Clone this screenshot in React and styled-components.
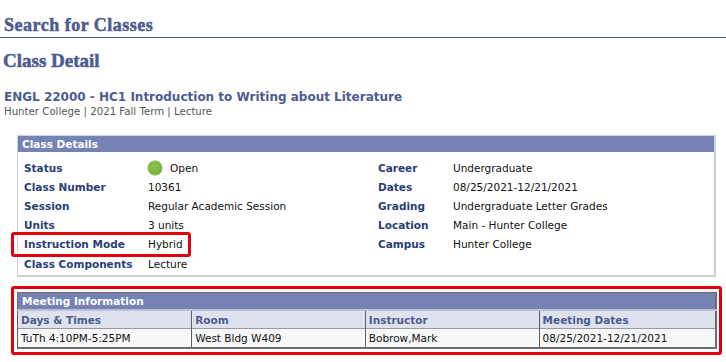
import React from "react";
import styled, { createGlobalStyle } from "styled-components";

const GlobalStyle = createGlobalStyle`
  html, body {
    margin: 0;
    padding: 0;
    background: #ffffff;
  }
  body {
    font-family: "DejaVu Sans", Verdana, sans-serif;
    color: #000;
  }
`;

const Page = styled.div`
  width: 726px;
  height: 362px;
  overflow: hidden;
  padding-top: 16px;
  box-sizing: border-box;
`;

const PageTitle = styled.h1`
  margin: 0;
  padding: 0 0 2px 4px;
  font-family: "Liberation Serif", Georgia, serif;
  font-weight: bold;
  font-size: 18px;
  line-height: 19px;
  letter-spacing: 0.5px;
  color: #4d5b8f;
  -webkit-text-stroke: 0.5px #4d5b8f;
  border-bottom: 1.5px solid #4d5b8f;
`;

const SubTitle = styled.h2`
  margin: 12px 0 0 3px;
  font-family: "Liberation Serif", Georgia, serif;
  font-weight: bold;
  font-size: 19px;
  line-height: 22px;
  color: #4d5b8f;
  -webkit-text-stroke: 0.5px #4d5b8f;
`;

const CourseTitle = styled.div`
  margin: 18px 0 0 4px;
  font-weight: bold;
  font-size: 12px;
  line-height: 15px;
  color: #4d5b8f;
`;

const CourseMeta = styled.div`
  margin: 0 0 0 4px;
  font-size: 10.2px;
  line-height: 14px;
  color: #555;
`;

const Box = styled.section`
  margin: 16px 10px 0 17px;
  width: 699px;
  border: 1px solid #cfd0d6;
  border-right-width: 2px;
  border-bottom-width: 2px;
  box-sizing: border-box;
`;

const BoxHeader = styled.div`
  background: #7682b3;
  color: #fff;
  font-weight: bold;
  font-size: 10.5px;
  line-height: 16px;
  height: 16px;
  padding-left: 4px;
`;

const Columns = styled.div`
  display: grid;
  grid-template-columns: 354px 1fr;
  padding: 6px 0 2px 6px;
`;

const FieldList = styled.div`
  display: flex;
  flex-direction: column;
`;

const Field = styled.div`
  position: relative;
  display: grid;
  grid-template-columns: ${({ $labelWidth }) => $labelWidth}px 1fr;
  align-items: center;
  height: 19.2px;
  font-size: 10.5px;

  ${({ $highlight }) =>
    $highlight &&
    `
    &::after {
      content: "";
      position: absolute;
      left: -13px;
      top: -3px;
      width: 180px;
      height: 25px;
      border: 3px solid #e0000b;
      border-radius: 3px;
      box-sizing: border-box;
    }
  `}
`;

const Label = styled.span`
  font-weight: bold;
  color: #2a3d78;
`;

const Value = styled.span`
  display: flex;
  align-items: center;
  gap: 8px;
  color: #111;
`;

const StatusDot = styled.span`
  display: inline-block;
  width: 14px;
  height: 14px;
  border-radius: 50%;
  background: radial-gradient(circle at 45% 40%, #8cc84b, #6aa631);
  box-shadow: 0 0 0 0.5px #5d9228;
`;

const Highlight = styled.div`
  margin: 9px 4px 0 11px;
  border: 3px solid #e0000b;
  border-radius: 3px;
  padding: 3px;
`;

const Grid = styled.table`
  width: 700px;
  border-collapse: collapse;
  border: 1px solid #6d6d6d;
  border-right-width: 2px;
  border-bottom-width: 2px;
  font-size: 10.5px;
`;

const GridTitle = styled.th`
  background: #7682b3;
  color: #fff;
  text-align: left;
  font-weight: bold;
  height: 16px;
  padding: 0 4px;
  line-height: 16px;
`;

const HeadCell = styled.th`
  background: #dde2ee;
  color: #4d5b8f;
  text-align: left;
  font-weight: bold;
  height: 17px;
  padding: 0 3px;
  border-left: 1px solid #5f5f5f;
  border-top: 2px solid #b8c0d8;
  width: ${({ $w }) => $w}px;
`;

const Cell = styled.td`
  background: #f7f7f7;
  color: #111;
  height: 18px;
  padding: 0 3px;
  border-left: 1px solid #5f5f5f;
  border-top: 1px solid #9a9a9a;
`;

const leftFields = [
  ["Status", "Open", true],
  ["Class Number", "10361"],
  ["Session", "Regular Academic Session"],
  ["Units", "3 units"],
  ["Instruction Mode", "Hybrid", false, true],
  ["Class Components", "Lecture"],
];

const rightFields = [
  ["Career", "Undergraduate"],
  ["Dates", "08/25/2021-12/21/2021"],
  ["Grading", "Undergraduate Letter Grades"],
  ["Location", "Main - Hunter College"],
  ["Campus", "Hunter College"],
];

const meetingCols = [
  ["Days & Times", 175],
  ["Room", 175],
  ["Instructor", 173],
  ["Meeting Dates", 176],
];

const meetingRow = [
  "TuTh 4:10PM-5:25PM",
  "West Bldg W409",
  "Bobrow,Mark",
  "08/25/2021-12/21/2021",
];

const App = () => (
  <Page>
    <GlobalStyle />
    <PageTitle>Search for Classes</PageTitle>
    <SubTitle>Class Detail</SubTitle>
    <CourseTitle>
      ENGL 22000 - HC1 Introduction to Writing about Literature
    </CourseTitle>
    <CourseMeta>Hunter College | 2021 Fall Term | Lecture</CourseMeta>

    <Box>
      <BoxHeader>Class Details</BoxHeader>
      <Columns>
        <FieldList>
          {leftFields.map(([label, value, dot, hl]) => (
            <Field key={label} $labelWidth={124} $highlight={hl}>
              <Label>{label}</Label>
              <Value>
                {dot && <StatusDot />}
                {value}
              </Value>
            </Field>
          ))}
        </FieldList>
        <FieldList>
          {rightFields.map(([label, value]) => (
            <Field key={label} $labelWidth={75}>
              <Label>{label}</Label>
              <Value>{value}</Value>
            </Field>
          ))}
        </FieldList>
      </Columns>
    </Box>

    <Highlight>
      <Grid>
        <thead>
          <tr>
            <GridTitle colSpan={4}>Meeting Information</GridTitle>
          </tr>
          <tr>
            {meetingCols.map(([name, w]) => (
              <HeadCell key={name} $w={w}>
                {name}
              </HeadCell>
            ))}
          </tr>
        </thead>
        <tbody>
          <tr>
            {meetingRow.map((v) => (
              <Cell key={v}>{v}</Cell>
            ))}
          </tr>
        </tbody>
      </Grid>
    </Highlight>
  </Page>
);

export default App;
